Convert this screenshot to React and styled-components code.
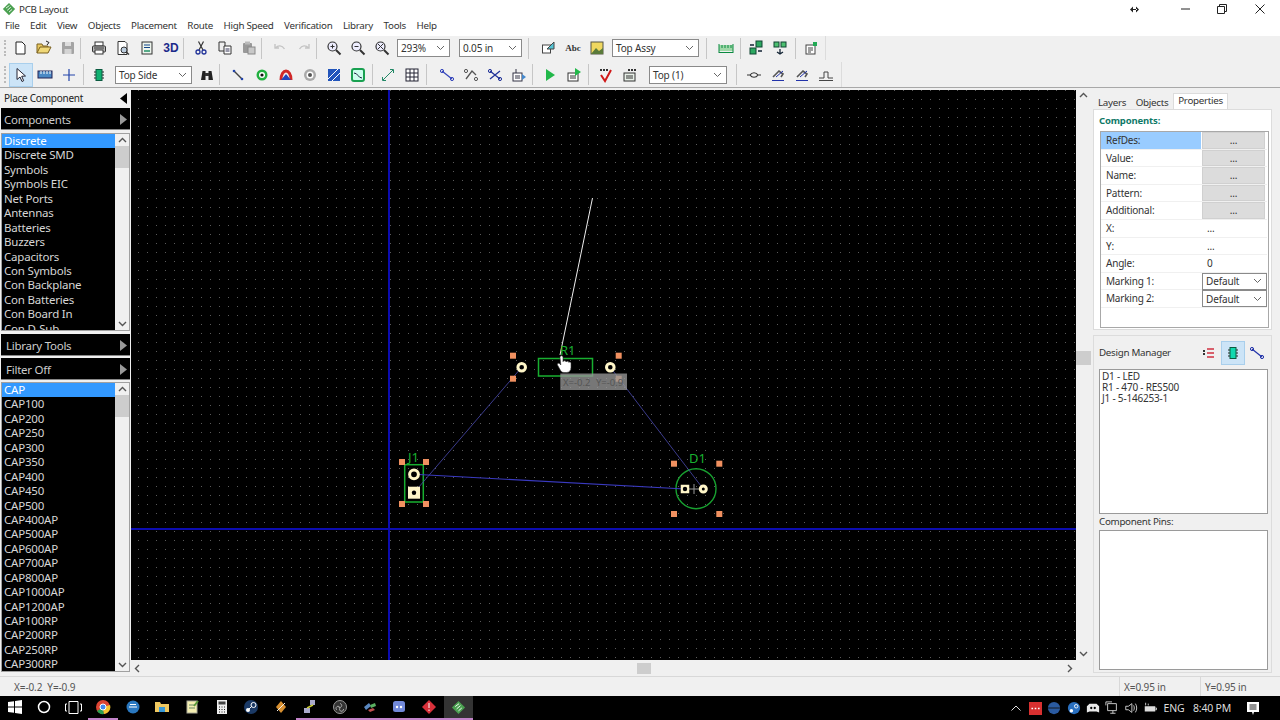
import React from 'react'
import styled, { createGlobalStyle } from 'styled-components'

const GlobalStyle = createGlobalStyle`
  html, body { margin: 0; padding: 0; background: #f0f0f0; }
  * { box-sizing: border-box; }
`

const uiFont = `"Noto Sans", "Open Sans", sans-serif`

const Page = styled.div`
  width: 1280px;
  height: 720px;
  overflow: hidden;
  display: flex;
  flex-direction: column;
  font-family: ${uiFont};
  font-size: 10px;
  color: #222;
  background: #f0f0f0;
`

const TitleBar = styled.div`
  height: 18px;
  background: #fff;
  display: flex;
  align-items: center;
  padding-left: 2px;
  gap: 3px;
  color: #333;
  font-size: 9.8px;
  letter-spacing: -0.3px;
`

const WindowControls = styled.div`
  margin-left: auto;
  display: flex;
  align-items: center;
`

const WindowControl = styled.div`
  width: ${p => p.$w}px;
  height: 18px;
  display: flex;
  align-items: center;
  justify-content: center;
`

const MenuBar = styled.div`
  height: 18px;
  background: #fff;
  display: flex;
  align-items: center;
  padding: 0 0 3px 5px;
  gap: 10.6px;
  color: #333;
  font-size: 9.8px;
  letter-spacing: -0.3px;
`

const ToolArea = styled.div`
  height: 52px;
  border-bottom: 1px solid #a8a8a8;
  display: flex;
  flex-direction: column;
  gap: 2px;
`

const Toolbar = styled.div`
  height: ${p => p.$h}px;
  width: ${p => p.$w}px;
  padding-left: ${p => p.$pad}px;
  display: flex;
  align-items: center;
  position: relative;
  border-right: 1px solid #dcdcdc;
  &::before {
    content: '';
    position: absolute;
    left: 4px;
    top: 4px;
    bottom: 4px;
    border-left: 2px dotted #bbb;
  }
`

const ToolButton = styled.div`
  width: 24px;
  height: 24px;
  flex: none;
  margin-left: ${p => p.$ml || 0}px;
  display: flex;
  align-items: center;
  justify-content: center;
  background: ${p => (p.$active ? '#cce4f7' : 'transparent')};
  border: 1px solid ${p => (p.$active ? '#a9cfec' : 'transparent')};
`

const Sep = styled.div`
  width: 1px;
  height: 21px;
  flex: none;
  background: #c6c6c6;
  margin: 0 ${p => p.$r}px 0 ${p => p.$l}px;
`

const ComboBox = styled.div`
  width: ${p => p.$w}px;
  height: ${p => p.$h || 18}px;
  flex: none;
  margin-left: ${p => p.$ml || 0}px;
  background: #fff;
  border: 1px solid #8a8a8a;
  display: flex;
  align-items: center;
  justify-content: space-between;
  padding: 0 4px 0 3px;
  font-size: 10px;
  letter-spacing: -0.15px;
  color: #333;
`

const Main = styled.div`
  height: 588px;
  display: grid;
  grid-template-columns: 131px 945px 15px 189px;
  grid-template-rows: 2px 570px 16px;
`

const LeftPanel = styled.div`
  grid-column: 1;
  grid-row: 1 / 4;
  display: flex;
  flex-direction: column;
  padding: 2px 1px 0 1px;
`

const PanelHead = styled.div`
  height: 16px;
  margin-bottom: 2px;
  padding: 0 3px;
  display: flex;
  align-items: center;
  justify-content: space-between;
  font-size: 10px;
  letter-spacing: -0.25px;
  color: #222;
`

const BlackBar = styled.div`
  height: 22px;
  margin: ${p => p.$mt || 0}px 0 1px;
  padding: 1px 3px 0 ${p => p.$pl || 3}px;
  background: #000;
  color: #ccc;
  font-size: 11.5px;
  letter-spacing: -0.25px;
  display: flex;
  align-items: center;
  justify-content: space-between;
  border-bottom: 1px solid #888;
`

const ListBox = styled.div`
  height: ${p => p.$h}px;
  margin-top: ${p => p.$mt || 0}px;
  display: flex;
  border: 1px solid #a0a0a0;
  background: #000;
`

const ListItems = styled.div`
  flex: 1;
  overflow: hidden;
  font-size: 11.5px;
  letter-spacing: -0.2px;
  color: #d6d6d6;
`

const ListItem = styled.div`
  height: 14.45px;
  line-height: 14.45px;
  padding-left: 2px;
  white-space: nowrap;
  background: ${p => (p.$selected ? '#3399ff' : 'transparent')};
  color: ${p => (p.$selected ? '#fff' : 'inherit')};
`

const VScroll = styled.div`
  width: ${p => p.$w || 14}px;
  flex: none;
  background: #f0f0f0;
  display: flex;
  flex-direction: column;
  align-items: center;
  padding: 3px 0;
`

const VThumb = styled.div`
  width: 100%;
  height: ${p => p.$h}px;
  margin-top: ${p => p.$mt}px;
  background: #cdcdcd;
`

const ArrowEnd = styled.div`
  margin-top: auto;
  line-height: 0;
`

const Canvas = styled.div`
  grid-column: 2;
  grid-row: 2;
  background-color: #000;
  background-image: radial-gradient(circle at 0.5px 0.5px, #5a5a5a 0.7px, transparent 0.8px);
  background-size: 9px 9px;
  background-position: 7px 9px;
`

const CanvasSvg = styled.svg`
  display: block;
  width: 945px;
  height: 570px;
`

const BoardLabel = styled.text`
  font-family: ${uiFont};
  font-size: 13px;
  fill: #18b030;
`

const TipText = styled.text`
  font-family: ${uiFont};
  font-size: 9.5px;
  word-spacing: 3px;
  fill: #555;
`

const HScroll = styled.div`
  grid-column: 2 / 4;
  grid-row: 3;
  display: flex;
  align-items: center;
  padding: 0 3px;
`

const HThumb = styled.div`
  width: 14px;
  height: 11px;
  margin-left: 497px;
  background: #cdcdcd;
`

const HArrowEnd = styled.div`
  margin-left: auto;
  margin-right: 15px;
  line-height: 0;
`

const CanvasVScroll = styled(VScroll)`
  grid-column: 3;
  grid-row: 1 / 3;
  width: 15px;
  padding-top: 4px;
`

const RightPanel = styled.div`
  grid-column: 4;
  grid-row: 1 / 4;
  padding: 5px 8px 0 2px;
  display: flex;
  flex-direction: column;
`

const Tabs = styled.div`
  height: 16px;
  display: flex;
  align-items: flex-end;
`

const Tab = styled.div`
  width: ${p => p.$w}px;
  height: ${p => (p.$active ? 16 : 14)}px;
  background: ${p => (p.$active ? '#fff' : 'transparent')};
  border: 1px solid ${p => (p.$active ? '#dcdcdc' : 'transparent')};
  border-bottom: none;
  color: #333;
  font-size: 9.8px;
  letter-spacing: -0.3px;
  line-height: 13px;
  text-align: center;
`

const PropsCard = styled.div`
  height: 221px;
  background: #fff;
  border: 1px solid #dcdcdc;
  padding: 3px 4px 0 5px;
`

const CardTitle = styled.div`
  height: 18px;
  color: #0f7a68;
  font-weight: 700;
  font-size: 9.5px;
  letter-spacing: -0.15px;
  line-height: 16px;
`

const PropsTable = styled.div`
  height: 197px;
  width: 169px;
  margin-left: 1px;
  border: 1px solid #a8a8a8;
  padding: 0 1px 1px 0;
`

const PropRow = styled.div`
  height: 17.6px;
  display: grid;
  grid-template-columns: 100px 66px;
  align-items: stretch;
  border-bottom: 1px solid #f0f0f0;
  color: #333;
  font-size: 10px;
  letter-spacing: -0.2px;
`

const PropName = styled.div`
  padding-left: 5px;
  line-height: 16px;
  background: ${p => (p.$selected ? '#99ccff' : 'transparent')};
`

const PropButton = styled.div`
  margin: 0 2px 0 1px;
  background: #dcdcdc;
  border: 1px solid #d0d0d0;
  text-align: center;
  line-height: 14px;
`

const PropValue = styled.div`
  padding-left: 6px;
  line-height: 16px;
`

const DesignCard = styled.div`
  flex: 1;
  margin: 5px 0 3px;
  border: 1px solid #dcdcdc;
  padding: 0 3px 0 5px;
  display: flex;
  flex-direction: column;
`

const DesignHead = styled.div`
  height: 33px;
  display: flex;
  align-items: center;
  font-size: 9.8px;
  letter-spacing: -0.3px;
  color: #333;
`

const DesignTools = styled.div`
  margin-left: auto;
  margin-right: -1px;
  display: flex;
  align-items: center;
`

const TextBox = styled.div`
  height: ${p => p.$h}px;
  background: #fff;
  border: 1px solid #9a9a9a;
  padding: 1px 2px;
  font-size: 10px;
  letter-spacing: -0.2px;
  line-height: 11px;
  color: #333;
`

const PinsLabel = styled.div`
  height: 16px;
  font-size: 9.8px;
  letter-spacing: -0.3px;
  line-height: 16px;
  color: #333;
`

const StatusBar = styled.div`
  height: 20px;
  border-top: 1px solid #d8d8d8;
  display: grid;
  grid-template-columns: 1119px 81px 80px;
  font-size: 10px;
  letter-spacing: -0.1px;
  color: #555;
  line-height: 20px;
`

const StatusCell = styled.div`
  padding-left: ${p => p.$pad}px;
  border-left: ${p => (p.$line ? '1px solid #d8d8d8' : 'none')};
`

const Taskbar = styled.div`
  height: 24px;
  background: #000;
  display: flex;
  align-items: center;
  color: #ddd;
  font-size: 10.5px;
  letter-spacing: -0.2px;
`

const TaskIcon = styled.div`
  width: ${p => p.$w || 29.6}px;
  height: 24px;
  flex: none;
  display: flex;
  align-items: center;
  justify-content: center;
  background: ${p => (p.$current ? '#333' : 'transparent')};
  border-bottom: 2px solid ${p => (p.$running ? '#c283c8' : 'transparent')};
`

const Tray = styled.div`
  margin-left: auto;
  display: flex;
  align-items: center;
`

const TrayItem = styled.div`
  width: ${p => p.$w || 19.2}px;
  margin-left: ${p => p.$ml || 0}px;
  padding-right: ${p => p.$pr || 0}px;
  display: flex;
  justify-content: center;
  align-items: center;
  flex: none;
  white-space: nowrap;
`

const IconLabel = styled.span`
  font-family: ${p => p.$font};
  font-size: ${p => p.$size}px;
  font-weight: 700;
  color: ${p => p.$color};
`

const Svg = ({ s = 16, children }) => (
  <svg width={s} height={s} viewBox="0 0 16 16" fill="none">{children}</svg>
)

const ChevronDown = ({ c = '#666' }) => (
  <svg width="9" height="6" viewBox="0 0 9 6" fill="none"><path d="M1 1l3.5 3.5L8 1" stroke={c} /></svg>
)
const TriRight = ({ c = '#999' }) => (
  <svg width="7" height="11" viewBox="0 0 7 11"><path d="M0 0l7 5.5L0 11z" fill={c} /></svg>
)
const TriLeft = () => (
  <svg width="7" height="11" viewBox="0 0 7 11"><path d="M7 0L0 5.5 7 11z" fill="#000" /></svg>
)
const Caret = ({ up }) => (
  <svg width="9" height="6" viewBox="0 0 9 6" fill="none">
    <path d={up ? 'M1 5l3.5-3.5L8 5' : 'M1 1l3.5 3.5L8 1'} stroke="#555" strokeWidth="1.4" />
  </svg>
)

const Magnifier = ({ mark }) => (
  <Svg>
    <circle cx="6.5" cy="6.5" r="4.5" stroke="#333" strokeWidth="1.2" fill="#eef" />
    <path d="M10 10l4.5 4.5" stroke="#333" strokeWidth="2" />
    <path d={mark} stroke="#333" />
  </Svg>
)
const Chip = ({ c = '#10b070' }) => (
  <Svg>
    <path d="M3 5h10M3 8h10M3 11h10" stroke="#222" />
    <rect x="5" y="2.5" width="6" height="11" fill={c} stroke="#0a5a40" />
  </Svg>
)
const TraceIcon = ({ c = '#3344bb', d = 'M3 4l10 8' }) => (
  <Svg>
    <path d={d} stroke={c} strokeWidth="1.3" />
    <circle cx="3" cy="4" r="1.6" stroke={c} />
    <circle cx="13" cy="12" r="1.6" stroke={c} />
  </Svg>
)
const UnderlineTrack = () => (
  <Svg>
    <path d="M3 10l6-6 4 3-2 3" stroke="#555" strokeWidth="1.6" />
    <path d="M6 10l7-6" stroke="#2233aa" />
    <path d="M2 13.5h12" stroke="#2233aa" />
  </Svg>
)

const icons = {
  newFile: <Svg><path d="M4 2h6l3 3v9H4z" fill="#fff" stroke="#222" /></Svg>,
  open: <Svg><path d="M1 13V4h5l1 2h5v2" fill="#e8c860" stroke="#7a6020" /><path d="M1 13l3-6h11l-3 6z" fill="#f0d878" stroke="#7a6020" /><path d="M10 1l3 1.5L11 5" stroke="#222" /></Svg>,
  save: <Svg><rect x="2" y="2" width="12" height="12" rx="1" fill="#a4a4a4" /><rect x="5" y="2" width="6" height="4" fill="#ddd" /><rect x="4.5" y="9" width="7" height="5" fill="#d4d4d4" /></Svg>,
  print: <Svg><rect x="4" y="2" width="8" height="4" fill="#fff" stroke="#333" /><rect x="1.5" y="6" width="13" height="6" rx="1" fill="#bbb" stroke="#333" /><rect x="4" y="10" width="8" height="4" fill="#fff" stroke="#333" /><path d="M3 8h10" stroke="#333" /></Svg>,
  preview: <Svg><path d="M3 1.5h7l2 2v11H3z" fill="#fff" stroke="#333" /><circle cx="9" cy="10" r="3" fill="#bcd" stroke="#333" /><path d="M11 12l3 2.5" stroke="#333" strokeWidth="1.5" /></Svg>,
  report: <Svg><rect x="3" y="2" width="10" height="12" fill="#eef5ee" stroke="#333" /><path d="M5 5h6M5 7.5h6" stroke="#148" /><rect x="5" y="10" width="6" height="2" fill="#5a8" /></Svg>,
  cut: <Svg><path d="M5.5 1.5L10 10M10.5 1.5L6 10" stroke="#333" strokeWidth="1.2" /><circle cx="5" cy="12" r="2" stroke="#223399" strokeWidth="1.3" /><circle cx="11" cy="12" r="2" stroke="#223399" strokeWidth="1.3" /></Svg>,
  copy: <Svg><path d="M2 2h6v9H2z" fill="#eee" stroke="#333" /><path d="M7 6h7v8H7z" fill="#fff" stroke="#333" /><path d="M8.5 9h4M8.5 11h4" stroke="#335" /></Svg>,
  paste: <Svg><rect x="2" y="3" width="9" height="10" rx="1" fill="#999" /><rect x="7" y="7" width="7" height="7" fill="#c8c8c8" stroke="#888" /><rect x="4" y="1.5" width="5" height="3" fill="#bbb" /></Svg>,
  undo: <Svg><path d="M3 4v4h4M3.5 8C6 5 10 5 12.5 9" stroke="#c4c4c4" strokeWidth="1.4" /></Svg>,
  redo: <Svg><path d="M13 4v4H9M12.5 8C10 5 6 5 3.5 9" stroke="#c4c4c4" strokeWidth="1.4" /></Svg>,
  zoomIn: <Magnifier mark="M4.5 6.5h4M6.5 4.5v4" />,
  zoomOut: <Magnifier mark="M4.5 6.5h4" />,
  zoomFit: <Magnifier mark="M4 4l5 5M9 4L4 9" />,
  addText: <Svg><rect x="1.5" y="5" width="8" height="8" fill="#fff" stroke="#444" /><path d="M6 9l7-7v7z" fill="#55c4d4" stroke="#444" /></Svg>,
  pointer: <Svg><path d="M4 1.5v11l3-2.5 2 4.5 1.7-.8-2-4.4 3.8-.3z" fill="#fff" stroke="#223" /></Svg>,
  ruler: <Svg><rect x="1" y="4" width="14" height="7" fill="#4a88c4" stroke="#225" /><path d="M4 4v3M7 4v3M10 4v3M13 4v3" stroke="#fff" /></Svg>,
  plus: <Svg><path d="M8 2v12M2 8h12" stroke="#2244aa" strokeWidth="1.2" /></Svg>,
  binoculars: <Svg><path d="M2 13l1.5-9h3V13zM14 13l-1.5-9h-3V13z" fill="#222" /><rect x="6" y="6" width="4" height="3" fill="#333" /></Svg>,
  trace: <Svg><path d="M4 4l8 8" stroke="#444" strokeWidth="1.4" /><circle cx="4" cy="4" r="1.3" fill="#2244aa" /><circle cx="12" cy="12" r="1.3" fill="#2244aa" /></Svg>,
  via: <Svg><circle cx="8" cy="8" r="5.5" fill="#22b040" /><circle cx="8" cy="8" r="3" fill="#fff" /><circle cx="8" cy="8" r="1.6" fill="#111" /></Svg>,
  arc: <Svg><path d="M3 13c0-12 10-12 10 0" stroke="#d02828" strokeWidth="3" /><path d="M3 13l5-6 5 6z" fill="#2244bb" /></Svg>,
  pad: <Svg><circle cx="8" cy="8" r="6" fill="#aaa" /><circle cx="8" cy="8" r="3.5" fill="#fff" /><circle cx="8" cy="8" r="2" fill="#555" /></Svg>,
  plane: <Svg><rect x="2" y="2" width="12" height="12" fill="#2255bb" /><path d="M2 12L12 2M6 14l8-8" stroke="#fff" /></Svg>,
  copper: <Svg><rect x="2" y="2" width="12" height="12" rx="2" fill="#cfe" stroke="#18a050" strokeWidth="2" /><path d="M4 6c4 0 4 5 8 5" stroke="#224" /></Svg>,
  measure: <Svg><path d="M3 13L13 3" stroke="#228866" /><path d="M10 2.5h3.5V6M6 13.5H2.5V10" stroke="#228866" /></Svg>,
  grid: <Svg><rect x="2" y="2" width="12" height="12" fill="#fff" stroke="#223" /><path d="M2 6h12M2 10h12M6 2v12M10 2v12" stroke="#223" /></Svg>,
  route: <TraceIcon />,
  routeAlt: <TraceIcon c="#555" d="M3 12l6-8 4 4" />,
  cross: <TraceIcon c="#223399" d="M3 4l10 8M13 4L3 12" />,
  netList: <Svg><rect x="2" y="6" width="9" height="8" fill="#fff" stroke="#334" /><path d="M4 9h5M4 11h5" stroke="#334" /><path d="M11 7l4 3-4 3z" fill="#4488cc" /><path d="M5 2v4" stroke="#334" /></Svg>,
  play: <Svg><path d="M4 2l9 6-9 6z" fill="#22b84a" /></Svg>,
  playDoc: <Svg><rect x="2" y="6" width="10" height="8" fill="#fff" stroke="#333" /><path d="M4 9h6M4 11h6" stroke="#333" /><path d="M9 1l6 4-6 4z" fill="#22b84a" /></Svg>,
  drc: <Svg><path d="M3 8l4 6 6-11" stroke="#d01818" strokeWidth="2" /><path d="M2 3h9" stroke="#333" strokeWidth="2" strokeDasharray="2 1" /></Svg>,
  drcDoc: <Svg><rect x="2" y="6" width="11" height="8" fill="#e8f0e8" stroke="#333" /><path d="M4 9h7M4 11h7" stroke="#333" /><path d="M6 3h9" stroke="#333" strokeWidth="2" strokeDasharray="2 1" /></Svg>,
  diffPair: <Svg><path d="M1 8h3c2-3 6-3 8 0h3M4 8c2 3 6 3 8 0" stroke="#333" strokeWidth="1.2" /></Svg>,
  track: <UnderlineTrack />,
  flat: <Svg><path d="M1 11h5V5h4v6h5" stroke="#444" /><path d="M1 13.5h14" stroke="#444" /></Svg>,
  picture: <Svg><rect x="2" y="2" width="12" height="12" fill="#f0d860" stroke="#554" /><path d="M2 14l5-6 3 3 4-3v6z" fill="#5a7a3a" /></Svg>,
  board: <Svg><path d="M1 11h14V5H1z" fill="#9fd8a8" /><path d="M1 4v9M15 4v9M4 5v3M7 5v3M10 5v3M13 5v3M1 12.5h14" stroke="#0a8a40" /></Svg>,
  swapUp: <Svg><rect x="8" y="1" width="6" height="6" fill="#2ca860" stroke="#143" /><rect x="2" y="8" width="6" height="6" fill="#2ca860" stroke="#143" /><path d="M2 5h4M10 11h4" stroke="#123" strokeWidth="1.5" /></Svg>,
  swapDown: <Svg><rect x="2" y="2" width="5" height="5" fill="#4cc070" stroke="#143" /><rect x="9" y="2" width="5" height="5" fill="#4cc070" stroke="#143" /><path d="M8 9v5M5 12l3 2 3-2" stroke="#123" strokeWidth="1.3" /></Svg>,
  addDoc: <Svg><rect x="3" y="5" width="9" height="9" fill="#fff" stroke="#444" /><path d="M5 8h5M5 10h5M5 12h3" stroke="#444" /><path d="M10 2h4v4h-4z" fill="#22aa55" /></Svg>,
  chip: <Chip />,
  textAbc: <IconLabel $font={'"Liberation Serif", serif'} $size={9} $color="#333">Abc</IconLabel>,
  threeD: <IconLabel $font={'"Liberation Sans", sans-serif'} $size={12} $color="#1c2a8a">3D</IconLabel>,
}

const firstRow = [
  ['i', 'newFile'], ['i', 'open'], ['i', 'save'], ['s', 0, 6],
  ['i', 'print'], ['i', 'preview'], ['i', 'report'], ['i', 'threeD'], ['s', 0, 5],
  ['i', 'cut'], ['i', 'copy'], ['i', 'paste'], ['s', 0, 6],
  ['i', 'undo'], ['i', 'redo'], ['s', 0, 5],
  ['i', 'zoomIn'], ['i', 'zoomOut'], ['i', 'zoomFit'],
  ['c', '293%', 53, 3], ['c', '0.05 in', 63, 9], ['s', 6, 8],
  ['i', 'addText'], ['i', 'textAbc'], ['i', 'picture'],
  ['c', 'Top Assy', 87, 3], ['s', 7, 7],
  ['i', 'board'], ['s', 2, 3],
  ['i', 'swapUp'], ['i', 'swapDown'], ['s', 3, 3],
  ['i', 'addDoc'],
]

const secondRow = [
  ['a', 'pointer'], ['i', 'ruler'], ['i', 'plus'], ['s', 2, 3],
  ['i', 'chip'], ['c', 'Top Side', 77, 4], ['x', 'binoculars', 3], ['s', 0, 6],
  ['i', 'trace'], ['i', 'via'], ['i', 'arc'], ['i', 'pad'], ['i', 'plane'], ['i', 'copper'], ['s', 2, 3],
  ['i', 'measure'], ['i', 'grid'], ['s', 2, 8],
  ['i', 'route'], ['i', 'routeAlt'], ['i', 'cross'], ['i', 'netList'], ['s', 1, 5],
  ['i', 'play'], ['i', 'playDoc'], ['s', 2, 5],
  ['i', 'drc'], ['i', 'drcDoc'],
  ['c', 'Top (1)', 78, 7], ['s', 9, 5],
  ['i', 'diffPair'], ['i', 'track'], ['i', 'track'], ['i', 'flat'],
]

const ToolRow = ({ items, width, height, pad }) => (
  <Toolbar $w={width} $h={height} $pad={pad}>
    {items.map((it, ix) => {
      if (it[0] === 's') return <Sep key={ix} $l={it[1]} $r={it[2]} />
      if (it[0] === 'c') {
        return (
          <ComboBox key={ix} $w={it[2]} $ml={it[3]}>
            {it[1]}<ChevronDown />
          </ComboBox>
        )
      }
      if (it[0] === 'x') return <ToolButton key={ix} $ml={it[2]}>{icons[it[1]]}</ToolButton>
      return <ToolButton key={ix} $active={it[0] === 'a'}>{icons[it[1]]}</ToolButton>
    })}
  </Toolbar>
)

const categories = ['Discrete', 'Discrete SMD', 'Symbols', 'Symbols EIC', 'Net Ports', 'Antennas', 'Batteries', 'Buzzers', 'Capacitors', 'Con Symbols', 'Con Backplane', 'Con Batteries', 'Con Board In', 'Con D-Sub']
const parts = ['CAP', 'CAP100', 'CAP200', 'CAP250', 'CAP300', 'CAP350', 'CAP400', 'CAP450', 'CAP500', 'CAP400AP', 'CAP500AP', 'CAP600AP', 'CAP700AP', 'CAP800AP', 'CAP1000AP', 'CAP1200AP', 'CAP100RP', 'CAP200RP', 'CAP250RP', 'CAP300RP']

const ScrollList = ({ items, height, mt }) => (
  <ListBox $h={height} $mt={mt}>
    <ListItems>
      {items.map((name, ix) => <ListItem key={name} $selected={ix === 0}>{name}</ListItem>)}
    </ListItems>
    <VScroll>
      <Caret up />
      <VThumb $h={22} $mt={3} />
      <ArrowEnd><Caret /></ArrowEnd>
    </VScroll>
  </ListBox>
)

const Handle = ({ x, y }) => <rect x={x - 3} y={y - 3} width="6" height="6" fill="#f09060" />

const RoundPad = ({ x, y, r = 5.4 }) => (
  <circle cx={x} cy={y} r={r - 1.6} fill="#000" stroke="#fff6c8" strokeWidth="3" />
)

const SquarePad = ({ x, y, s = 10 }) => (
  <>
    <rect x={x - s / 2} y={y - s / 2} width={s} height={s} fill="#fff6c8" />
    <circle cx={x} cy={y} r="2.2" fill="#000" />
  </>
)

const handles = [[513, 355.7], [513, 378.7], [618.7, 355.7], [618.7, 378.7], [402, 462], [426, 462], [402, 504], [426, 504], [674, 463.7], [719.3, 463.7], [674, 514], [719.3, 514]]

const Board = () => (
  <CanvasSvg viewBox="131 90 945 570">
    <path d="M389 90v570M131 529h945" stroke="#0c0cb0" strokeWidth="2" />
    <path d="M592.5 198L560 355" stroke="#eee" />
    <rect x="538.5" y="358.5" width="54" height="17.5" stroke="#18b030" strokeWidth="1.5" fill="none" />
    <BoardLabel x="560" y="355">R1</BoardLabel>
    <rect x="404.7" y="464.7" width="18.6" height="37.3" stroke="#18b030" strokeWidth="1.5" fill="none" />
    <BoardLabel x="408" y="462">J1</BoardLabel>
    <circle cx="696" cy="488.7" r="20" stroke="#18a030" strokeWidth="1.4" fill="none" />
    <BoardLabel x="689" y="463">D1</BoardLabel>
    <path d="M688 489h12M694 484v10" stroke="#999" />
    <path d="M414 492.7L521.7 367.3M610.3 367.3L703.3 489" stroke="#4a4ab0" strokeWidth="0.8" />
    <path d="M414 474.3L685 489" stroke="#3a3ac0" strokeWidth="1.1" />
    <RoundPad x={521.7} y={367.3} />
    <RoundPad x={610.3} y={367.3} />
    <RoundPad x={414} y={474.3} r={6} />
    <SquarePad x={414} y={492.7} s={12} />
    <SquarePad x={685} y={489} s={8.5} />
    <RoundPad x={703.3} y={489} r={4.6} />
    {handles.map(([x, y]) => <Handle key={`${x}-${y}`} x={x} y={y} />)}
    <rect x="560.3" y="373.5" width="66.7" height="16.5" fill="#999" fillOpacity="0.78" />
    <TipText x="563" y="385.5">X=-0.2 Y=-0.9</TipText>
    <path d="M560 357.5c0-2.4 3-2.4 3 0v4.2c.5-1.3 3-1.3 3 .2.7-1 2.8-.8 2.8.5.8-.6 2.2-.3 2.2 1v4.1c0 3-1.8 5-4.5 5h-2.5c-2 0-3-1-4-3l-2.5-4.5c-.7-1.6 1.3-2.5 2.5-1l.8 1z" fill="#fff" stroke="#333" strokeWidth="0.6" />
  </CanvasSvg>
)

const propRows = [
  ['RefDes:', 'btn'], ['Value:', 'btn'], ['Name:', 'btn'], ['Pattern:', 'btn'], ['Additional:', 'btn'],
  ['X:', '...'], ['Y:', '...'], ['Angle:', '0'], ['Marking 1:', 'combo'], ['Marking 2:', 'combo'],
]

const PropertyCell = ({ kind }) => {
  if (kind === 'btn') return <PropButton>...</PropButton>
  if (kind === 'combo') return <ComboBox $w={65} $h={17} $ml={1}>Default<ChevronDown /></ComboBox>
  return <PropValue>{kind}</PropValue>
}

const WinLogo = () => (
  <svg width="14" height="14" viewBox="0 0 14 14"><path d="M0 2l6-.8V6.5H0zM7 1l7-1v6.5H7zM0 7.5h6v5.3l-6-.8zM7 7.5h7V14l-7-1z" fill="#fff" /></svg>
)

const taskApps = [
  { key: 'chrome', running: true, icon: <Svg><circle cx="8" cy="8" r="7" fill="#dd4433" /><path d="M8 8L2 12a7 7 0 0 0 7 3z" fill="#2aa050" /><path d="M8 8l7-2a7 7 0 0 1-6 9z" fill="#f4c430" /><circle cx="8" cy="8" r="3" fill="#4488ee" stroke="#fff" /></Svg> },
  { key: 'mail', icon: <Svg><circle cx="8" cy="8" r="6.5" fill="#2a78c0" /><path d="M4 8h8M5 5.5h6" stroke="#fff" /></Svg> },
  { key: 'folder', icon: <Svg><path d="M1 13V3h5l1 2h8v8z" fill="#f0c860" /><rect x="5" y="8" width="6" height="5" fill="#3a9ad8" /></Svg> },
  { key: 'notes', icon: <Svg><rect x="3" y="2" width="10" height="12" fill="#f4eeb0" stroke="#aa9" /><path d="M5 6h6M5 9h6" stroke="#686" /><path d="M10 7l4-5" stroke="#5a9a3a" strokeWidth="2" /></Svg> },
  { key: 'calc', icon: <Svg><rect x="3" y="1" width="10" height="14" fill="#eee" /><rect x="4.5" y="2.5" width="7" height="3" fill="#444" /><path d="M5 8h1M7.5 8h1M10 8h1M5 10.5h1M7.5 10.5h1M10 10.5h1M5 13h1M7.5 13h1M10 13h1" stroke="#222" /></Svg> },
  { key: 'steam', icon: <Svg><circle cx="8" cy="8" r="7" fill="#1b3a66" /><circle cx="10.5" cy="6" r="2.5" stroke="#fff" /><circle cx="5" cy="11" r="2" fill="#fff" /><path d="M6 10l3-3" stroke="#fff" /></Svg> },
  { key: 'tool', icon: <Svg><path d="M8 2l5 6-5 6-5-6z" fill="#d89030" /><path d="M4 12l8-8" stroke="#eee" /></Svg> },
  { key: 'net', running: true, icon: <Svg><rect x="8" y="1" width="5" height="5" fill="#aac" /><rect x="2" y="9" width="6" height="5" fill="#aac" /><path d="M5 9l6-3" stroke="#cc3" strokeWidth="1.5" /></Svg> },
  { key: 'obs', running: true, icon: <Svg><circle cx="8" cy="8" r="6.5" fill="#333" stroke="#999" /><path d="M8 4.5a2 2 0 1 1-2 3M5 11a2 2 0 1 1 3-2M11.5 10a2 2 0 1 1-3.5-1" stroke="#aaa" /></Svg> },
  { key: 'pile', running: true, icon: <Svg><path d="M2 8l5-4 2 3-5 4z" fill="#5a88c0" /><path d="M8 6l5-2 1 3-5 2z" fill="#5ab060" /><path d="M6 11l5-2 2 2-5 2z" fill="#c05050" /></Svg> },
  { key: 'discord', running: true, icon: <Svg><rect x="2" y="2" width="12" height="11" rx="2.5" fill="#7289da" /><circle cx="6" cy="8" r="1.2" fill="#fff" /><circle cx="10" cy="8" r="1.2" fill="#fff" /></Svg> },
  { key: 'red', running: true, icon: <Svg><path d="M8 1l7 7-7 7-7-7z" fill="#d8303a" /><path d="M8 4v5M8 10.5v1.5" stroke="#fff" /></Svg> },
]

const PcbLogo = ({ s = 14 }) => (
  <Svg s={s}>
    <path d="M8 1l7 7-7 7-7-7z" fill="#4aa050" />
    <path d="M4.5 7l4-3M6 9.500l4-3.500M8 11.5l3.5-3" stroke="#fff" />
  </Svg>
)

const App = () => (
  <Page>
    <GlobalStyle />
    <TitleBar>
      <PcbLogo />
      PCB Layout
      <WindowControls>
        <WindowControl $w={34}>
          <svg width="9" height="7" viewBox="0 0 9 7"><path d="M0 3.5L3 .5v6zM9 3.5L6 .5v6zM2 3h5v1H2z" fill="#222" /></svg>
        </WindowControl>
        <WindowControl $w={17} />
        <WindowControl $w={36}>
          <svg width="10" height="10" viewBox="0 0 10 10"><path d="M0 5h9" stroke="#222" /></svg>
        </WindowControl>
        <WindowControl $w={36}>
          <svg width="10" height="10" viewBox="0 0 10 10" fill="none"><path d="M.5 2.5h7v7h-7zM2.5 2.5v-2h7v7h-2" stroke="#222" /></svg>
        </WindowControl>
        <WindowControl $w={40}>
          <svg width="10" height="10" viewBox="0 0 10 10"><path d="M.5.5l9 9M9.5.5l-9 9" stroke="#222" /></svg>
        </WindowControl>
      </WindowControls>
    </TitleBar>
    <MenuBar>
      {['File', 'Edit', 'View', 'Objects', 'Placement', 'Route', 'High Speed', 'Verification', 'Library', 'Tools', 'Help'].map(m => <span key={m}>{m}</span>)}
    </MenuBar>
    <ToolArea>
      <ToolRow items={firstRow} width={826} height={24} pad={8} />
      <ToolRow items={secondRow} width={842} height={25} pad={9} />
    </ToolArea>
    <Main>
      <LeftPanel>
        <PanelHead>Place Component<TriLeft /></PanelHead>
        <BlackBar>Components<TriRight /></BlackBar>
        <ScrollList items={categories} height={198} mt={2} />
        <BlackBar $mt={3} $pl={5}>Library Tools<TriRight /></BlackBar>
        <BlackBar $mt={1} $pl={5}>Filter Off<TriRight /></BlackBar>
        <ScrollList items={parts} height={290} mt={1} />
      </LeftPanel>
      <Canvas><Board /></Canvas>
      <CanvasVScroll>
        <Caret up />
        <VThumb $h={14} $mt={253} />
        <ArrowEnd><Caret /></ArrowEnd>
      </CanvasVScroll>
      <HScroll>
        <svg width="6" height="9" viewBox="0 0 6 9" fill="none"><path d="M5 1L1.5 4.5 5 8" stroke="#555" strokeWidth="1.4" /></svg>
        <HThumb />
        <HArrowEnd>
          <svg width="6" height="9" viewBox="0 0 6 9" fill="none"><path d="M1 1l3.5 3.5L1 8" stroke="#555" strokeWidth="1.4" /></svg>
        </HArrowEnd>
      </HScroll>
      <RightPanel>
        <Tabs>
          <Tab $w={38}>Layers</Tab>
          <Tab $w={42}>Objects</Tab>
          <Tab $w={55} $active>Properties</Tab>
        </Tabs>
        <PropsCard>
          <CardTitle>Components:</CardTitle>
          <PropsTable>
            {propRows.map(([name, kind], ix) => (
              <PropRow key={name}>
                <PropName $selected={ix === 0}>{name}</PropName>
                <PropertyCell kind={kind} />
              </PropRow>
            ))}
          </PropsTable>
        </PropsCard>
        <DesignCard>
          <DesignHead>
            Design Manager
            <DesignTools>
              <ToolButton>
                <Svg><path d="M6 4h7M6 8h7M6 12h7" stroke="#d03040" strokeWidth="1.5" /><path d="M3 5v6" stroke="#333" strokeWidth="2" strokeDasharray="2 1" /></Svg>
              </ToolButton>
              <ToolButton $active><Chip c="#10d8b0" /></ToolButton>
              <ToolButton><TraceIcon c="#2233aa" /></ToolButton>
            </DesignTools>
          </DesignHead>
          <TextBox $h={145}>
            <div>D1 - LED</div>
            <div>R1 - 470 - RES500</div>
            <div>J1 - 5-146253-1</div>
          </TextBox>
          <PinsLabel>Component Pins:</PinsLabel>
          <TextBox $h={140} />
        </DesignCard>
      </RightPanel>
    </Main>
    <StatusBar>
      <StatusCell $pad={14}>X=-0.2&nbsp;&nbsp;Y=-0.9</StatusCell>
      <StatusCell $pad={4} $line>X=0.95 in</StatusCell>
      <StatusCell $pad={4} $line>Y=0.95 in</StatusCell>
    </StatusBar>
    <Taskbar>
      <TaskIcon $w={29}><WinLogo /></TaskIcon>
      <TaskIcon $w={29}>
        <svg width="14" height="14" viewBox="0 0 14 14" fill="none"><circle cx="7" cy="7" r="5.5" stroke="#fff" strokeWidth="1.5" /></svg>
      </TaskIcon>
      <TaskIcon $w={30}>
        <svg width="17" height="13" viewBox="0 0 17 13" fill="none"><path d="M4 .5h9v12H4zM2 3H.5v7H2M15 3h1.5v7H15" stroke="#fff" /></svg>
      </TaskIcon>
      {taskApps.map((app, ix) => (
        <TaskIcon key={app.key} $running={app.running} $w={ix === 0 ? 30 : 29.6}>{app.icon}</TaskIcon>
      ))}
      <TaskIcon $w={29} $running $current><PcbLogo s={15} /></TaskIcon>
      <Tray>
        <TrayItem>
          <svg width="10" height="6" viewBox="0 0 10 6" fill="none"><path d="M.5 5.5L5 1l4.5 4.5" stroke="#ddd" /></svg>
        </TrayItem>
        <TrayItem>
          <Svg s={13}><rect width="16" height="16" fill="#d83030" /><path d="M3 8h2M7 8h2M11 8h2" stroke="#fff" strokeWidth="2" /></Svg>
        </TrayItem>
        <TrayItem>
          <Svg s={14}><circle cx="8" cy="8" r="7" fill="#2a5aa0" /><path d="M1 8h14" stroke="#111" /></Svg>
        </TrayItem>
        <TrayItem>
          <Svg s={14}><circle cx="8" cy="8" r="7" fill="#2a70c0" /><circle cx="10.5" cy="6" r="2" stroke="#fff" /><circle cx="5" cy="11" r="2" fill="#fff" /></Svg>
        </TrayItem>
        <TrayItem>
          <Svg s={14}><path d="M1 13V6l3-3h8l3 3v7l-3-1H4z" fill="#e8e8e8" /><circle cx="6" cy="8" r="1.3" fill="#000" /><circle cx="10" cy="8" r="1.3" fill="#000" /></Svg>
        </TrayItem>
        <TrayItem>
          <Svg s={14}><path d="M3 3h10v8H3zM1 5V1h7M6 14h6M9 11v3" stroke="#ddd" /></Svg>
        </TrayItem>
        <TrayItem>
          <Svg s={14}><path d="M2 6h3l4-3v10l-4-3H2z" stroke="#ddd" /><path d="M11 5c1 2 1 4 0 6M13 3c2 3 2 7 0 10" stroke="#ddd" /></Svg>
        </TrayItem>
        <TrayItem>
          <Svg s={14}><rect x="2" y="6" width="12" height="6" fill="#ddd" /><path d="M14 8h1.5v2H14M3 2v3M6 3v2" stroke="#ddd" /></Svg>
        </TrayItem>
        <TrayItem $w={20} $ml={4}>ENG</TrayItem>
        <TrayItem $w={36} $ml={10}>8:40 PM</TrayItem>
        <TrayItem $w={50} $pr={4}>
          <Svg><path d="M2 2h12v10H9l-1 3-1-3H2z" fill="#fff" /><path d="M4.5 5h7M4.5 7h7M4.5 9h7" stroke="#222" /></Svg>
        </TrayItem>
      </Tray>
    </Taskbar>
  </Page>
)

export default App
